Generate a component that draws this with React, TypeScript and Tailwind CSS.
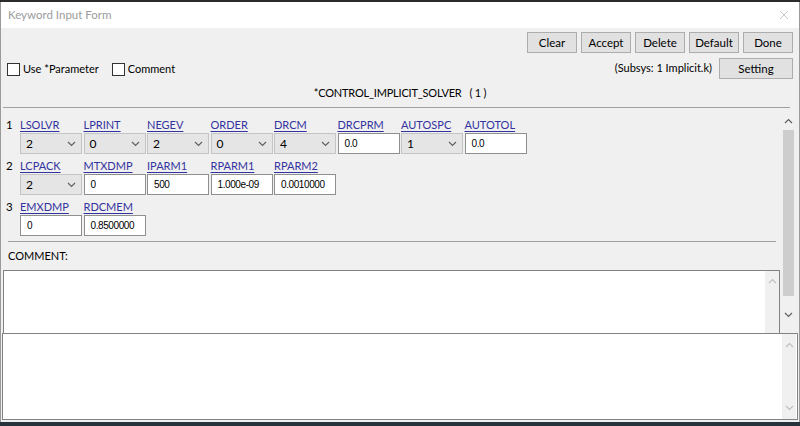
import React from 'react';

type Field = { label: string; kind: 'select' | 'input'; value: string };

const rows: Field[][] = [
  [
    { label: 'LSOLVR', kind: 'select', value: '2' },
    { label: 'LPRINT', kind: 'select', value: '0' },
    { label: 'NEGEV', kind: 'select', value: '2' },
    { label: 'ORDER', kind: 'select', value: '0' },
    { label: 'DRCM', kind: 'select', value: '4' },
    { label: 'DRCPRM', kind: 'input', value: '0.0' },
    { label: 'AUTOSPC', kind: 'select', value: '1' },
    { label: 'AUTOTOL', kind: 'input', value: '0.0' },
  ],
  [
    { label: 'LCPACK', kind: 'select', value: '2' },
    { label: 'MTXDMP', kind: 'input', value: '0' },
    { label: 'IPARM1', kind: 'input', value: '500' },
    { label: 'RPARM1', kind: 'input', value: '1.000e-09' },
    { label: 'RPARM2', kind: 'input', value: '0.0010000' },
  ],
  [
    { label: 'EMXDMP', kind: 'input', value: '0' },
    { label: 'RDCMEM', kind: 'input', value: '0.8500000' },
  ],
];

function Chevron({ up = false, className = '' }: { up?: boolean; className?: string }) {
  return (
    <svg width="9" height="6" viewBox="0 0 9 6" className={className}>
      <polyline
        points={up ? '1,5 4.5,1.5 8,5' : '1,1 4.5,4.5 8,1'}
        fill="none"
        stroke="currentColor"
        strokeWidth="1.2"
      />
    </svg>
  );
}

function Btn({ children, w = 'w-[50px]' }: { children: React.ReactNode; w?: string }) {
  return (
    <div className={`${w} h-[21px] bg-[#e1e1e1] border border-[#adadad] flex items-center justify-center text-[11.5px] text-black`}>
      {children}
    </div>
  );
}

function Check({ label }: { label: string }) {
  return (
    <div className="flex items-center gap-[3px]">
      <div className="w-[13px] h-[13px] bg-white border border-[#333]" />
      <span className="text-[11px] text-black">{label}</span>
    </div>
  );
}

function Control({ f }: { f: Field }) {
  if (f.kind === 'select') {
    return (
      <div className="w-[62px] h-[21px] bg-[#e5e5e5] border border-[#c4c4c4] flex items-center justify-between pl-[5px] pr-[5px]">
        <span className="text-[12px] text-black">{f.value}</span>
        <Chevron className="text-[#606060]" />
      </div>
    );
  }
  return (
    <div className="w-[62px] h-[21px] bg-white border border-[#8f8f8f] flex items-center pl-[6px]">
      <span className="text-[10px] tracking-[-0.4px] text-black font-['Liberation_Sans',sans-serif]">{f.value}</span>
    </div>
  );
}

export default function App() {
  return (
    <div className="w-[800px] h-[426px] overflow-hidden bg-[#f0f0f0] flex flex-col font-['Lato','Liberation_Sans',sans-serif] border-t-2 border-[#2b2b2b]">
      <div className="flex-1 flex flex-col border-l border-r border-[#9a9a9a] min-h-0">
        {/* Title bar */}
        <div className="h-[26px] bg-white flex items-center justify-between pl-[7px] pr-[10px] shrink-0">
          <span className="text-[11.5px] text-[#9b9b9b]">Keyword Input Form</span>
          <svg width="10" height="10" viewBox="0 0 10 10" className="text-[#c8c8c8]">
            <path d="M1 1 L9 9 M9 1 L1 9" stroke="currentColor" strokeWidth="1" />
          </svg>
        </div>

        {/* Header controls */}
        <div className="flex justify-end gap-[4px] pr-[6px] pt-[4px] shrink-0">
          <Btn>Clear</Btn>
          <Btn>Accept</Btn>
          <Btn>Delete</Btn>
          <Btn>Default</Btn>
          <Btn>Done</Btn>
        </div>
        <div className="flex items-center justify-between pl-[6px] pr-[6px] mt-[5px] shrink-0">
          <div className="flex items-center gap-[13px] pt-[1px]">
            <Check label="Use *Parameter" />
            <Check label="Comment" />
          </div>
          <div className="flex items-center gap-[7px]">
            <span className="text-[11px] text-black">(Subsys: 1 Implicit.k)</span>
            <Btn w="w-[74px]">Setting</Btn>
          </div>
        </div>
        <div className="h-[28px] flex items-center justify-center shrink-0">
          <span className="text-[11px] tracking-[-0.2px] text-black whitespace-pre">*CONTROL_IMPLICIT_SOLVER   ( 1 )</span>
        </div>
        <div className="mx-[2px] mr-[9px] border-b border-[#a0a0a0] shrink-0" />

        {/* Scroll region */}
        <div className="h-[225px] flex shrink-0">
          <div className="flex-1 flex flex-col min-w-0 overflow-hidden">
            <div className="flex flex-col gap-[4px] pt-[9px]">
              {rows.map((row, ri) => (
                <div key={ri} className="flex">
                  <div className="w-[19px] pl-[5px] h-[16px] flex items-center text-[11.5px] text-black">{ri + 1}</div>
                  {row.map((f) => (
                    <div key={f.label} className="w-[63.5px] flex flex-col">
                      <div className="h-[16px] flex items-center">
                        <span className="text-[11px] text-[#33339f] underline underline-offset-2">{f.label}</span>
                      </div>
                      <Control f={f} />
                    </div>
                  ))}
                </div>
              ))}
            </div>
            <div className="ml-[7px] mr-[6px] mt-[5px] border-b border-[#a0a0a0]" />
            <div className="h-[28px] flex items-center pl-[7px] text-[11px] text-black">COMMENT:</div>
            <div className="ml-[2px] mr-[2px] flex-1 bg-white border-t border-l border-r border-[#828282] flex justify-end">
              <div className="w-[14px] bg-[#f0f0f0] flex justify-center pt-[7px]">
                <Chevron up className="text-[#c0c0c0]" />
              </div>
            </div>
          </div>
          <div className="w-[13px] mr-[4px] mt-[4px] flex flex-col items-center">
            <div className="h-[18px] flex items-center">
              <Chevron up className="text-[#606060]" />
            </div>
            <div className="w-[11px] h-[166px] bg-[#cdcdcd]" />
            <div className="flex-1 flex items-center">
              <Chevron className="text-[#606060]" />
            </div>
          </div>
        </div>

        {/* Bottom panel */}
        <div className="flex-1 mx-[1px] mb-[2px] bg-white border border-[#828282] flex justify-end">
          <div className="w-[14px] mr-[1px] bg-[#f0f0f0] flex flex-col items-center justify-between py-[8px]">
            <Chevron up className="text-[#c0c0c0]" />
            <Chevron className="text-[#c0c0c0]" />
          </div>
        </div>
      </div>
      <div className="h-[4px] bg-[#26323c] shrink-0" />
    </div>
  );
}
